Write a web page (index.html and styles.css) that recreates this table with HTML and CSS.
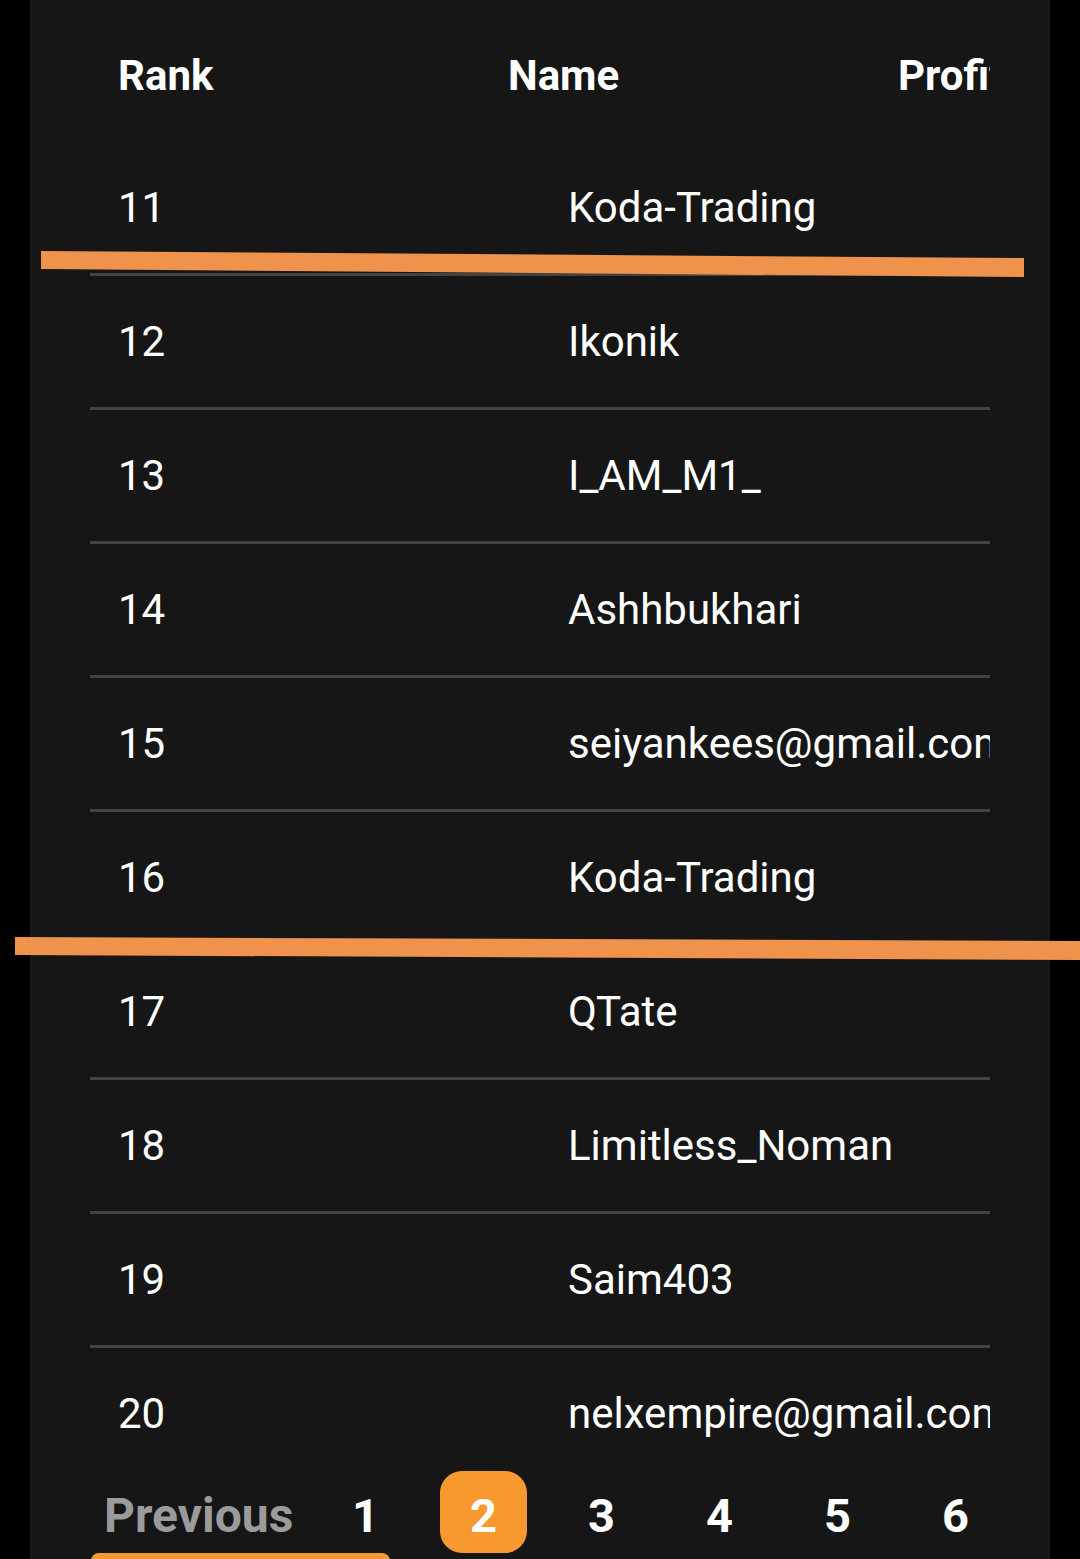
FILE: index.html
```html
<!DOCTYPE html>
<html>
<head>
<meta charset="utf-8">
<link rel="stylesheet" href="styles.css">
</head>
<body>
<div class="panel">
  <div class="table">
    <div class="row head">
      <div class="cell rank">Rank</div>
      <div class="cell name">Name</div>
      <div class="cell profit">Profit</div>
    </div>
    <div class="row"><div class="cell rank">11</div><div class="cell name">Koda-Trading</div><div class="cell profit"></div></div>
    <div class="row"><div class="cell rank">12</div><div class="cell name">Ikonik</div><div class="cell profit"></div></div>
    <div class="row"><div class="cell rank">13</div><div class="cell name">I_AM_M1_</div><div class="cell profit"></div></div>
    <div class="row"><div class="cell rank">14</div><div class="cell name">Ashhbukhari</div><div class="cell profit"></div></div>
    <div class="row"><div class="cell rank">15</div><div class="cell name">seiyankees@gmail.com</div><div class="cell profit"></div></div>
    <div class="row"><div class="cell rank">16</div><div class="cell name">Koda-Trading</div><div class="cell profit"></div></div>
    <div class="row"><div class="cell rank">17</div><div class="cell name">QTate</div><div class="cell profit"></div></div>
    <div class="row"><div class="cell rank">18</div><div class="cell name">Limitless_Noman</div><div class="cell profit"></div></div>
    <div class="row"><div class="cell rank">19</div><div class="cell name">Saim403</div><div class="cell profit"></div></div>
    <div class="row last"><div class="cell rank">20</div><div class="cell name">nelxempire@gmail.com</div><div class="cell profit"></div></div>
  </div>
  <div class="pager">
    <div class="pg prev">Previous</div>
    <div class="pg">1</div>
    <div class="pg active">2</div>
    <div class="pg">3</div>
    <div class="pg">4</div>
    <div class="pg">5</div>
    <div class="pg">6</div>
  </div>
  <div class="bar"></div>
</div>
<svg class="marks" width="1080" height="1559" viewBox="0 0 1080 1559">
  <polygon points="41,251 1024,258 1024,277 41,269" fill="#ef924b"/>
  <polygon points="15,937 1080,941 1080,960 15,955" fill="#ef924b"/>
</svg>
</body>
</html>
```

FILE: styles.css
```css
html, body {
  margin: 0;
  padding: 0;
  background: #000;
}
body {
  width: 1080px;
  height: 1559px;
  overflow: hidden;
  position: relative;
  font-family: Roboto, "Liberation Sans", sans-serif;
  color: #fff;
}
.panel {
  margin-left: 30px;
  width: 1020px;
  height: 1559px;
  background: #161616;
  overflow: hidden;
}
.table {
  margin-left: 60px;
  width: 900px;
  overflow: hidden;
}
.row {
  display: grid;
  grid-template-columns: 390px 389px 300px;
  height: 131px;
  border-bottom: 3px solid #424242;
  align-items: center;
  font-size: 42px;
  white-space: nowrap;
}
.row.head {
  height: 134px;
  padding-top: 8px;
  border-bottom: none;
  font-weight: 700;
  font-size: 42px;
}
.cell.rank {
  padding-left: 28px;
}
.cell.name {
  padding-left: 88px;
}
.row.head .cell.name {
  padding-left: 28px;
}
.cell.profit {
  padding-left: 29px;
}
.row.last {
  border-bottom: none;
  height: 90px;
  padding-top: 20px;
}
.pager {
  display: flex;
  gap: 31px;
  margin-top: 13px;
  padding-left: 74px;
  height: 82px;
}
.pg {
  width: 87px;
  height: 82px;
  box-sizing: border-box;
  padding-top: 6px;
  display: flex;
  align-items: center;
  justify-content: center;
  font-size: 47px;
  font-weight: 700;
  color: #fff;
  border-radius: 22px;
}
.pg.prev {
  width: 187px;
  justify-content: flex-start;
  color: #9b9b9b;
  font-size: 48px;
}
.pg.active {
  background: #f8992f;
}
.bar {
  margin-left: 61px;
  width: 299px;
  height: 12px;
  background: #f8992f;
  border-radius: 8px 8px 0 0;
}
.marks {
  position: absolute;
  left: 0;
  top: 0;
  pointer-events: none;
}
```
